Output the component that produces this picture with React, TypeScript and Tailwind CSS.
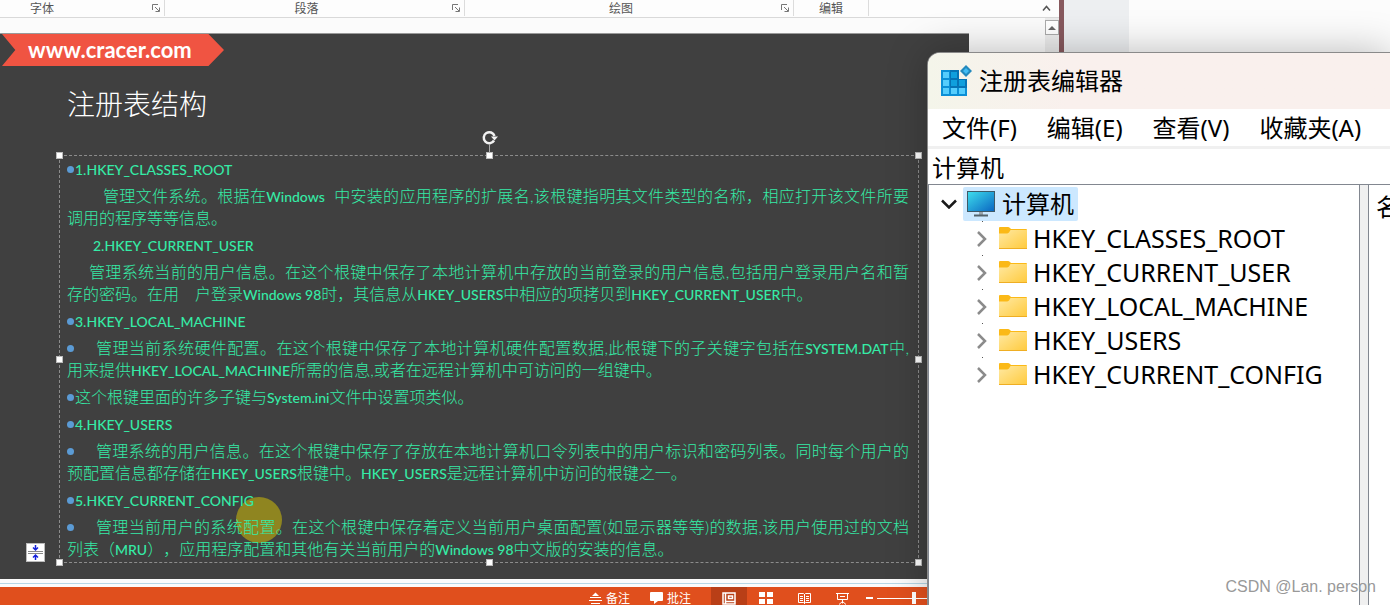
import { ReactNode } from "react";

const slideText = [
  { bullet: true, lines: [{ text: "1.HKEY_CLASSES_ROOT" }] },
  {
    indent: "pl-9",
    lines: [
      { text: "管理文件系统。根据在Windows  中安装的应用程序的扩展名,该根键指明其文件类型的名称，相应打开该文件所要", full: true },
      { text: "调用的程序等等信息。" },
    ],
  },
  { indent: "pl-[26px]", lines: [{ text: "2.HKEY_CURRENT_USER" }] },
  {
    indent: "pl-[22px]",
    lines: [
      { text: "管理系统当前的用户信息。在这个根键中保存了本地计算机中存放的当前登录的用户信息,包括用户登录用户名和暂", full: true },
      { text: "存的密码。在用　户登录Windows 98时，其信息从HKEY_USERS中相应的项拷贝到HKEY_CURRENT_USER中。" },
    ],
  },
  { bullet: true, lines: [{ text: "3.HKEY_LOCAL_MACHINE" }] },
  {
    bullet: true,
    indent: "pl-[21px]",
    lines: [
      { text: "管理当前系统硬件配置。在这个根键中保存了本地计算机硬件配置数据,此根键下的子关键字包括在SYSTEM.DAT中,", full: true },
      { text: "用来提供HKEY_LOCAL_MACHINE所需的信息,或者在远程计算机中可访问的一组键中。" },
    ],
  },
  { bullet: true, lines: [{ text: "这个根键里面的许多子键与System.ini文件中设置项类似。" }] },
  { bullet: true, lines: [{ text: "4.HKEY_USERS" }] },
  {
    bullet: true,
    indent: "pl-[21px]",
    lines: [
      { text: "管理系统的用户信息。在这个根键中保存了存放在本地计算机口令列表中的用户标识和密码列表。同时每个用户的", full: true },
      { text: "预配置信息都存储在HKEY_USERS根键中。HKEY_USERS是远程计算机中访问的根键之一。" },
    ],
  },
  { bullet: true, lines: [{ text: "5.HKEY_CURRENT_CONFIG" }] },
  {
    bullet: true,
    indent: "pl-[21px]",
    lines: [
      { text: "管理当前用户的系统配置。在这个根键中保存着定义当前用户桌面配置(如显示器等等)的数据,该用户使用过的文档", full: true },
      { text: "列表（MRU），应用程序配置和其他有关当前用户的Windows 98中文版的安装的信息。" },
    ],
  },
];

const rootKeys = [
  "HKEY_CLASSES_ROOT",
  "HKEY_CURRENT_USER",
  "HKEY_LOCAL_MACHINE",
  "HKEY_USERS",
  "HKEY_CURRENT_CONFIG",
];

const handles = [
  "-left-1 -top-1",
  "left-1/2 -ml-[3px] -top-1",
  "-right-1 -top-1",
  "-left-1 top-1/2 -mt-[3px]",
  "-right-1 top-1/2 -mt-[3px]",
  "-left-1 -bottom-1",
  "left-1/2 -ml-[3px] -bottom-1",
  "-right-1 -bottom-1",
];

// Latin runs are set a little smaller than the Chinese text around them
function Mixed({ text }: { text: string }) {
  return (
    <>
      {text.split(/([A-Za-z0-9_.]+(?: [0-9]+)?)/).map((part, i) =>
        i % 2 ? (
          <span key={i} className="text-sm leading-[22px] font-medium">{part}</span>
        ) : (
          part
        )
      )}
    </>
  );
}

function Launcher() {
  return (
    <button aria-label="更多选项" className="w-4 h-4 flex items-center justify-center">
      <svg width="8" height="8" viewBox="0 0 8 8" fill="none" stroke="#777">
        <path d="M0.5 6V0.5H6M3 3l4 4M7.5 3.5v4h-4" />
      </svg>
    </button>
  );
}

function RibbonGroup({ label, className }: { label: string; className: string }) {
  return (
    <div className={`flex items-center border-r border-[#dcdcdc] h-4 shrink-0 ${className}`}>
      <span className="flex-1 text-center">{label}</span>
      {label !== "编辑" && <Launcher />}
    </div>
  );
}

function StatusButton({ label, active, children }: { label: string; active?: boolean; children: ReactNode }) {
  return (
    <button
      aria-label={label}
      className={`h-[22px] flex items-center justify-center ${active ? "bg-[#b93f17] w-9" : "w-[38px]"}`}
    >
      {children}
    </button>
  );
}

function RegistryIcon() {
  return (
    <svg width="32" height="32" viewBox="0 0 32 32">
      <path d="M0 5h17v9h9v17H0z" fill="#0b8fd6" />
      <path d="M9 5h9v9h8v9H9z" fill="#0673b5" />
      <g fill="#55cdfd">
        <path d="M2 7h6v6H2zM2 15h6v6H2zM2 23h6v6H2zM10 23h6v6h-6zM18 23h6v6h-6z" />
      </g>
      <path d="M10 7h6v6h-6zM10 15h6v6h-6zM18 15h6v6h-6z" fill="#109fdd" />
      <path d="M25 0l6 6-6 6-6-6z" fill="#2389bd" />
      <path d="M25 3l3 3-3 3-3-3z" fill="#43bdf4" />
    </svg>
  );
}

function MonitorIcon() {
  return (
    <svg width="28" height="26" viewBox="0 0 28 26">
      <defs>
        <linearGradient id="screen" x1="0" y1="0" x2="1" y2="1">
          <stop offset="0" stopColor="#3ddcec" />
          <stop offset="1" stopColor="#0b67c2" />
        </linearGradient>
      </defs>
      <path d="M0 0h28v21H0z" fill="#3f5a68" />
      <path d="M1 1h26v19H1z" fill="url(#screen)" />
      <path d="M12 21h4v3h-4z" fill="#9aa5ac" />
      <path d="M7 23.500h14V25.500H7z" fill="#53626b" />
    </svg>
  );
}

function FolderIcon() {
  return (
    <svg width="28" height="22" viewBox="0 0 28 22" className="shrink-0">
      <defs>
        <linearGradient id="folder" x1="0" y1="0" x2="1" y2="1">
          <stop offset="0" stopColor="#ffe9a3" />
          <stop offset="1" stopColor="#ffca3c" />
        </linearGradient>
      </defs>
      <path d="M0 1q0-1 1-1h8q1 0 2 1l1 1h15q1 0 1 1v5H0z" fill="#fbb917" />
      <path d="M0 6.500h8q1 0 2-1l1.500-2.500H28v18q0 1-1 1H1q-1 0-1-1z" fill="url(#folder)" />
      <path d="M0 21.500h28" stroke="#efae23" />
    </svg>
  );
}

function Slide() {
  return (
    <section className="flex-1 min-h-0 w-[969px] bg-[#404040] border-t border-[#999]">
      <div className="ml-[2px] w-[222px] h-8 bg-[#f05442] flex items-center pl-[26px] [clip-path:polygon(0_0,93%_0,100%_50%,93%_100%,0_100%,6%_50%)]">
        <span className="font-[Lato] font-bold text-[22px] leading-8 text-white">www.cracer.com</span>
      </div>
      <h1 className="mt-[17px] ml-[67px] text-[28px] leading-10 font-light text-white">注册表结构</h1>
      <div className="relative mt-8 ml-[59px] w-[860px] border border-dashed border-[#8c8c8c] py-[2px] pl-[7px] pr-[9px]">
        <div className="absolute left-[176px] bottom-[19px] size-[46px] rounded-full bg-[#8f8520]" />
        <div className="relative flex flex-col gap-[5px] text-base leading-[22px] text-[#35eba6] font-[Lato,'Noto_Sans_CJK_SC',sans-serif] font-light [text-spacing-trim:space-all]">
          {slideText.map((p, i) => (
            <div key={i}>
              {p.lines.map((line, j) => (
                <p key={j} className={`flex h-[22px] whitespace-pre ${j === 0 ? p.indent ?? "" : ""}`}>
                  {j === 0 && p.bullet && (
                    <span className={`w-2 shrink-0 flex items-center ${p.indent ? "-ml-[21px] mr-[21px]" : ""}`}>
                      <span className="size-[7px] rounded-full bg-[#5b9bd5]" />
                    </span>
                  )}
                  <span className={line.full ? "flex-1 whitespace-pre-wrap [text-align-last:justify]" : ""}>
                    <Mixed text={line.text} />
                  </span>
                </p>
              ))}
            </div>
          ))}
        </div>
        {handles.map((pos) => (
          <span key={pos} className={`absolute size-[7px] bg-white border border-[#bbb] ${pos}`} />
        ))}
        <svg width="16" height="26" viewBox="0 0 16 26" fill="none" className="absolute left-1/2 -ml-[7px] -top-[26px]">
          <path d="M12 10.500A5.500 5.500 0 1 1 12.500 6" stroke="#f2f2f2" strokeWidth="2.500" />
          <path d="M9 6.500h7l-3.500 4z" fill="#f2f2f2" />
          <path d="M7.500 14v9" stroke="#aaa" />
        </svg>
        <button aria-label="自动调整选项" className="absolute -left-[34px] bottom-0 size-[19px] bg-white border border-[#bbb]">
          <svg width="17" height="17" viewBox="0 0 17 17" fill="none">
            <path d="M1 7.500h15M1 9.500h15" stroke="#888" />
            <path d="M8.500 1v5M6 3.500l2.500 2.500L11 3.500M8.500 16v-5M6 13.500L8.500 11l2.500 2.500" stroke="#1420d8" strokeWidth="1.500" />
          </svg>
        </button>
      </div>
    </section>
  );
}

function StatusBar() {
  return (
    <footer className="h-[18px] shrink-0 overflow-hidden bg-[#e04f1d] flex items-start text-xs leading-[22px] text-white pl-[589px] pr-[60px]">
      <button className="flex items-center gap-1 h-[22px]">
        <svg width="13" height="12" viewBox="0 0 13 12" fill="none" stroke="white">
          <path d="M3 4l3.500-3.500L10 4z" fill="white" stroke="none" />
          <path d="M1 5.500h11M0 8.500h13M2 11.500h9" />
        </svg>
        备注
      </button>
      <button className="flex items-center gap-1 h-[22px] ml-5">
        <svg width="13" height="12" viewBox="0 0 13 12" fill="white">
          <path d="M1 0h11q1 0 1 1v7q0 1-1 1H8l-4 3V9H1Q0 9 0 8V1q0-1 1-1z" />
        </svg>
        批注
      </button>
      <div className="flex ml-5">
        <StatusButton label="普通视图" active>
          <svg width="14" height="13" viewBox="0 0 14 13" fill="none" stroke="white" strokeWidth="1.500">
            <path d="M1 1h12v11H1zM3.500 1v11M4 9.500h9" />
            <path d="M6.500 4h4v2.500h-4z" />
          </svg>
        </StatusButton>
        <StatusButton label="幻灯片浏览">
          <svg width="15" height="13" viewBox="0 0 15 13" fill="white">
            <path d="M0 0h6v5H0zM8 0h6v5H8zM0 7h6v5H0zM8 7h6v5H8z" />
          </svg>
        </StatusButton>
        <StatusButton label="阅读视图">
          <svg width="13" height="13" viewBox="0 0 13 13" fill="none" stroke="white">
            <path d="M.5 1.500h5l1 1 1-1h5v9h-5l-1 1-1-1h-5zM6.500 2v10M2 4.500h3M2 6.500h3M2 8.500h3M8 4.500h3M8 6.500h3M8 8.500h3" />
          </svg>
        </StatusButton>
        <StatusButton label="幻灯片放映">
          <svg width="13" height="13" viewBox="0 0 13 13" fill="none" stroke="white">
            <path d="M0 1.500h13M1.500 2v5.500h10V2M6.500 7.500v4M3 12.500l3.500-3 3.500 3M4 4.500h5" />
          </svg>
        </StatusButton>
      </div>
      <button aria-label="缩小" className="h-[22px] flex items-center ml-[5px]">
        <span className="w-[7px] h-[2px] bg-white" />
      </button>
      <input
        type="range"
        aria-label="缩放"
        defaultValue={50}
        className="ml-1 mt-[4px] w-[74px] h-[14px] appearance-none bg-[linear-gradient(#fff,#fff)] bg-[length:100%_1px] bg-center bg-no-repeat [&::-webkit-slider-thumb]:appearance-none [&::-webkit-slider-thumb]:w-1 [&::-webkit-slider-thumb]:h-3 [&::-webkit-slider-thumb]:bg-white"
      />
    </footer>
  );
}

function Presentation() {
  return (
    <div className="w-[1064px] h-full flex flex-col border-r-[5px] border-[#87595e] bg-[#fbfbfb]">
      <header className="h-[18px] shrink-0 flex items-start border-b border-[#d9d9d9] bg-[#fdfdfd] text-xs leading-4 text-[#555]">
        <RibbonGroup label="字体" className="w-[165px] [&>span]:text-left [&>span]:pl-[30px]" />
        <RibbonGroup label="段落" className="w-[300px]" />
        <RibbonGroup label="绘图" className="w-[329px]" />
        <RibbonGroup label="编辑" className="w-[75px]" />
        <button aria-label="折叠功能区" className="ml-auto mr-2 mt-[5px]">
          <svg width="9" height="7" viewBox="0 0 9 7" fill="none" stroke="#555" strokeWidth="1.500">
            <path d="M1 5.500l3.500-4 3.500 4" />
          </svg>
        </button>
      </header>
      <div className="flex-1 min-h-0 flex justify-between">
        <div className="flex flex-col pt-[15px] pb-2">
          <Slide />
        </div>
        <div className="w-[14px] pt-[2px] bg-[#ececec]">
          <button aria-label="向上滚动" className="w-[14px] h-[15px] bg-white border border-[#ababab] flex items-center justify-center">
            <svg width="8" height="4" viewBox="0 0 8 4">
              <path d="M4 0l4 4H0z" fill="#666" />
            </svg>
          </button>
        </div>
      </div>
      <div className="h-px shrink-0 -mt-[4px] mb-[3px] bg-[#b7d7e6]" />
      <StatusBar />
    </div>
  );
}

function RegistryEditor() {
  return (
    <div className="absolute left-[928px] right-0 top-[53px] bottom-0 flex flex-col overflow-hidden rounded-tl-[12px] bg-white text-2xl text-black font-['Noto_Sans','Noto_Sans_CJK_SC',sans-serif] shadow-[0_0_0_1px_#8a8a8a,0_0_40px_rgba(0,0,0,0.28)]">
      <div className="h-14 shrink-0 flex items-center gap-[6px] pl-[13px] bg-linear-to-r from-[#f4f5ea] to-[#f9f0ed] to-30%">
        <RegistryIcon />
        <span className="leading-8">注册表编辑器</span>
      </div>
      <nav className="h-10 shrink-0 flex items-center gap-[30px] pl-[14px] border-b-[3px] border-[#f0f0f0] whitespace-nowrap">
        <button>文件(F)</button>
        <button>编辑(E)</button>
        <button>查看(V)</button>
        <button>收藏夹(A)</button>
      </nav>
      <input aria-label="地址" defaultValue="计算机" className="h-9 shrink-0 w-full pl-1 border-b border-[#828790] outline-none leading-8" />
      <div className="flex-1 min-h-0 flex">
        <div className="w-[432px] shrink-0 border-l border-r border-[#828790] pt-[2px]">
          <div className="h-[34px] flex items-center gap-[6px] pl-3">
            <button aria-label="折叠">
              <svg width="16" height="10" viewBox="0 0 16 10" fill="none" stroke="#1a1a1a" strokeWidth="2.500">
                <path d="M1 1.500l7 7 7-7" />
              </svg>
            </button>
            <button className="h-[34px] px-1 flex items-center gap-[7px] rounded-[2px] bg-[#cce8ff] leading-8">
              <MonitorIcon />
              计算机
            </button>
          </div>
          <ul className="text-[25px]">
            {rootKeys.map((key) => (
              <li key={key} className="h-[34px] flex items-center gap-3 pl-12">
                <button aria-label={`展开 ${key}`} className="h-full w-[10px] flex flex-col items-center">
                  <span className="size-px bg-[#555]" />
                  <svg width="10" height="16" viewBox="0 0 10 16" fill="none" stroke="#8b8b8b" strokeWidth="2.500" className="my-auto">
                    <path d="M1 1l7 7-7 7" />
                  </svg>
                </button>
                <button className="flex items-center gap-[6px] leading-8">
                  <FolderIcon />
                  {key}
                </button>
              </li>
            ))}
          </ul>
        </div>
        <div className="w-2 shrink-0 bg-[#f0f0f0]" />
        <div className="flex-1 min-w-0 overflow-hidden border-l border-[#828790] pl-[7px] pt-1 whitespace-nowrap leading-9">
          名称
        </div>
      </div>
    </div>
  );
}

export default function App() {
  return (
    <main
      lang="zh-CN"
      className="relative h-screen overflow-hidden flex bg-[#fcfcfc] font-['Noto_Sans_CJK_SC',sans-serif]"
    >
      <div className="shrink-0">
        <Presentation />
      </div>
      <div className="w-[65px] shrink-0 bg-[#edeff1]" />
      <RegistryEditor />
      <div className="absolute right-[14px] bottom-2 text-base leading-5 text-[#999] font-['Liberation_Sans',sans-serif]">
        CSDN @Lan. person
      </div>
    </main>
  );
}
